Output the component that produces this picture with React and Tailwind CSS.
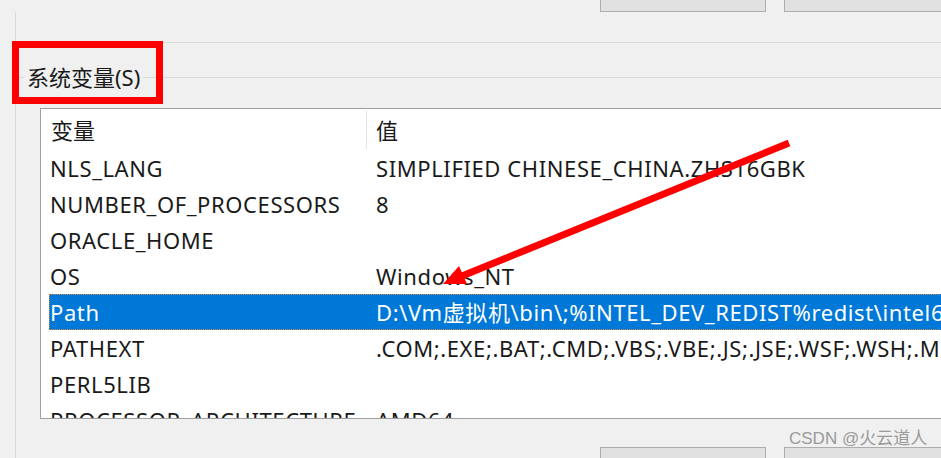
const rows = [
  { name: 'NLS_LANG', value: 'SIMPLIFIED CHINESE_CHINA.ZHS16GBK' },
  { name: 'NUMBER_OF_PROCESSORS', value: '8' },
  { name: 'ORACLE_HOME', value: '' },
  { name: 'OS', value: 'Windows_NT' },
  { name: 'Path', value: 'D:\\Vm虚拟机\\bin\\;%INTEL_DEV_REDIST%redist\\intel64\\compiler;C:\\Windows', selected: true },
  { name: 'PATHEXT', value: '.COM;.EXE;.BAT;.CMD;.VBS;.VBE;.JS;.JSE;.WSF;.WSH;.MSC' },
  { name: 'PERL5LIB', value: '' },
  { name: 'PROCESSOR_ARCHITECTURE', value: 'AMD64' },
];

const font = "font-['Noto_Sans','Noto_Sans_CJK_SC',sans-serif]";

export default function App() {
  return (
    <div className={`relative w-[941px] h-[458px] overflow-hidden bg-[#f0f0f0] ${font}`}>
      {/* top buttons, cut off */}
      <div className="flex h-[12px] pl-[600px] gap-[18px]">
        <div className="shrink-0 w-[166px] h-[12px] bg-[#e1e1e1] border border-t-0 border-[#adadad]" />
        <div className="shrink-0 w-[166px] h-[12px] bg-[#e1e1e1] border border-t-0 border-r-0 border-[#adadad]" />
      </div>

      <div className="ml-[15px] border-l border-[#dadada] flex flex-col">
        <div className="h-[30px] shrink-0" />
        <div className="border-t border-[#dadada] flex flex-col shrink-0">
          <div className="flex items-center h-[65px] shrink-0 pt-[2px]">
            <div className="w-[8px] h-px bg-[#dadada] mt-[1px]" />
            <span className="px-[3px] text-[22px] text-[#1a1a1a] leading-none">系统变量(S)</span>
            <div className="flex-1 h-px bg-[#dadada] mt-[1px]" />
          </div>

          {/* list view */}
          <div className="shrink-0 ml-[24px] w-[920px] h-[311px] border border-[#a0a0a0] border-r-0 bg-white overflow-hidden text-[22px] tracking-[0.6px] text-[#1a1a1a] leading-none">
            <div className="flex h-[41px] items-center">
              <div className="shrink-0 w-[326px] h-[38px] pl-[10px] flex items-center border-r border-[#e5e5e5] tracking-normal">变量</div>
              <div className="pl-[9px] tracking-normal">值</div>
            </div>
            {rows.map(r => (
              <div
                key={r.name}
                className={`ml-[8px] flex h-[36px] items-center whitespace-nowrap ${r.selected ? 'bg-[#0078d7] text-white border border-dotted border-[#c9854a]' : 'border border-transparent'}`}
              >
                <div className="shrink-0 w-[318px]">{r.name}</div>
                <div className="shrink-0 pl-[8px]">{r.value}</div>
              </div>
            ))}
          </div>

          <div className="flex pl-[584px] gap-[18px] mt-[28px]">
            <div className="shrink-0 w-[166px] h-[20px] bg-[#e1e1e1] border border-[#adadad]" />
            <div className="shrink-0 w-[166px] h-[20px] bg-[#e1e1e1] border border-r-0 border-[#adadad]" />
          </div>
        </div>
      </div>

      {/* annotation box */}
      <div className="absolute left-[12px] top-[41px] w-[151px] h-[63px] border-[7px] border-[#ff0000]" />

      {/* annotation arrow */}
      <svg className="absolute left-0 top-0" width="941" height="458" viewBox="0 0 941 458">
        <line x1="789" y1="143" x2="462" y2="276" stroke="#ff0000" strokeWidth="7" />
        <polygon points="443,284 467,284 459,266" fill="#ff0000" />
      </svg>

      <div className="absolute left-[789px] top-[430px] text-[17px] leading-none text-[#9a9a9a] font-['Liberation_Sans','Noto_Sans_CJK_SC',sans-serif]">
        CSDN @火云道人
      </div>
    </div>
  );
}
